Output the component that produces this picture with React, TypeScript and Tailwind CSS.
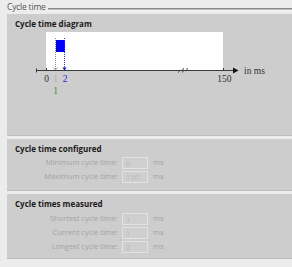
import React from "react";

const Row = ({ label, value }: { label: string; value: string }) => (
  <div className="flex items-center h-[14px]">
    <div className="w-[115px] text-right text-[7.5px] text-[#a3a3a3] pr-[4px] whitespace-nowrap">{label}</div>
    <div className="w-[26px] h-[12px] border border-[#e2e2e2] bg-[#cfcfcf] text-[7.5px] text-[#b8b8b8] pl-[3px] leading-[10px]">
      {value}
    </div>
    <div className="pl-[5px] text-[7.5px] text-[#a3a3a3]">ms</div>
  </div>
);

const Diagram = () => (
  <svg width="285" height="72" className="block" style={{ fontFamily: '"Liberation Serif", serif' }}>
    <rect x="39" y="4" width="177" height="38.5" fill="#ffffff" />
    <rect x="49" y="12" width="9" height="12" fill="#0000ff" />
    <line x1="48.5" y1="10" x2="48.5" y2="42" stroke="#8c8c8c" strokeWidth="1" strokeDasharray="1 1" />
    <line x1="57.5" y1="10" x2="57.5" y2="42" stroke="#2f2fff" strokeWidth="1" strokeDasharray="1 1" />
    <line x1="29" y1="42.5" x2="227" y2="42.5" stroke="#3a3a3a" strokeWidth="1" />
    <line x1="29.5" y1="40.5" x2="29.5" y2="44.5" stroke="#3a3a3a" strokeWidth="1" />
    <line x1="39.5" y1="40" x2="39.5" y2="42.5" stroke="#3a3a3a" strokeWidth="1" />
    <line x1="216.5" y1="40" x2="216.5" y2="42.5" stroke="#3a3a3a" strokeWidth="1" />
    <path d="M46.5 39.5 L48.5 42 L50.5 39.5" fill="none" stroke="#8c8c8c" strokeWidth="0.8" />
    <path d="M55.5 39.5 L57.5 42.5 L59.5 39.5 Z" fill="#0000ff" />
    <path d="M226 39.5 L231.5 42.5 L226 45.5 Z" fill="#111111" />
    <path d="M171.5 44.5 q1 -3.5 2.5 -2 q1.5 1.5 2.5 -2.5 M175.5 44.5 q1 -3.5 2.5 -2 q1.5 1.5 2.5 -2.5" fill="none" stroke="#3a3a3a" strokeWidth="0.9" />
    <text x="39.5" y="54" fontSize="9.5" fill="#303030" textAnchor="middle">0</text>
    <text x="48.5" y="54" fontSize="9.5" fill="#b0b0b0" textAnchor="middle">1</text>
    <text x="58" y="54" fontSize="9.5" fill="#2020e0" textAnchor="middle">2</text>
    <text x="48.5" y="66" fontSize="9.5" fill="#2e9a2e" textAnchor="middle">1</text>
    <text x="217.3" y="54" fontSize="9.5" fill="#303030" textAnchor="middle">150</text>
    <text x="237" y="45.5" fontSize="9.5" fill="#303030">in ms</text>
  </svg>
);

export default function App() {
  return (
    <div
      className="w-[292px] h-[267px] bg-[#ececec] overflow-hidden"
      style={{ fontFamily: '"Open Sans", sans-serif' }}
    >
      <div className="flex items-center h-[13px] pl-[7px]">
        <span className="text-[8.5px] tracking-[-0.2px] text-[#555555] leading-[13px]">Cycle time</span>
        <div className="flex-1 ml-[2px] mt-[5px] flex flex-col">
          <div className="h-[1px] bg-[#8a8a8a]" />
          <div className="h-[1px] bg-[#b8b8b8]" />
          <div className="h-[1px] bg-[#f6f6f6]" />
        </div>
      </div>
      <div className="pl-[7px] pt-[1px] flex flex-col gap-[3px]">
        <div className="h-[122px] bg-[#cdcdcd] border-b border-[#bdbdbd]">
          <div className="pl-[8px] pt-[3px] h-[14px] text-[8px] font-bold text-[#1a1a1a] leading-[14px]">
            Cycle time diagram
          </div>
          <Diagram />
        </div>
        <div className="h-[52px] bg-[#cdcdcd] border-b border-[#bdbdbd]">
          <div className="pl-[8px] pt-[3px] h-[17px] text-[8px] font-bold text-[#1a1a1a] leading-[14px]">
            Cycle time configured
          </div>
          <Row label="Minimum cycle time:" value="0" />
          <Row label="Maximum cycle time:" value="150" />
        </div>
        <div className="h-[65px] bg-[#cdcdcd] border-b border-[#bdbdbd]">
          <div className="pl-[8px] pt-[3px] h-[18px] text-[8px] font-bold text-[#1a1a1a] leading-[14px]">
            Cycle times measured
          </div>
          <Row label="Shortest cycle time:" value="1" />
          <Row label="Current cycle time:" value="1" />
          <Row label="Longest cycle time:" value="2" />
        </div>
      </div>
    </div>
  );
}
